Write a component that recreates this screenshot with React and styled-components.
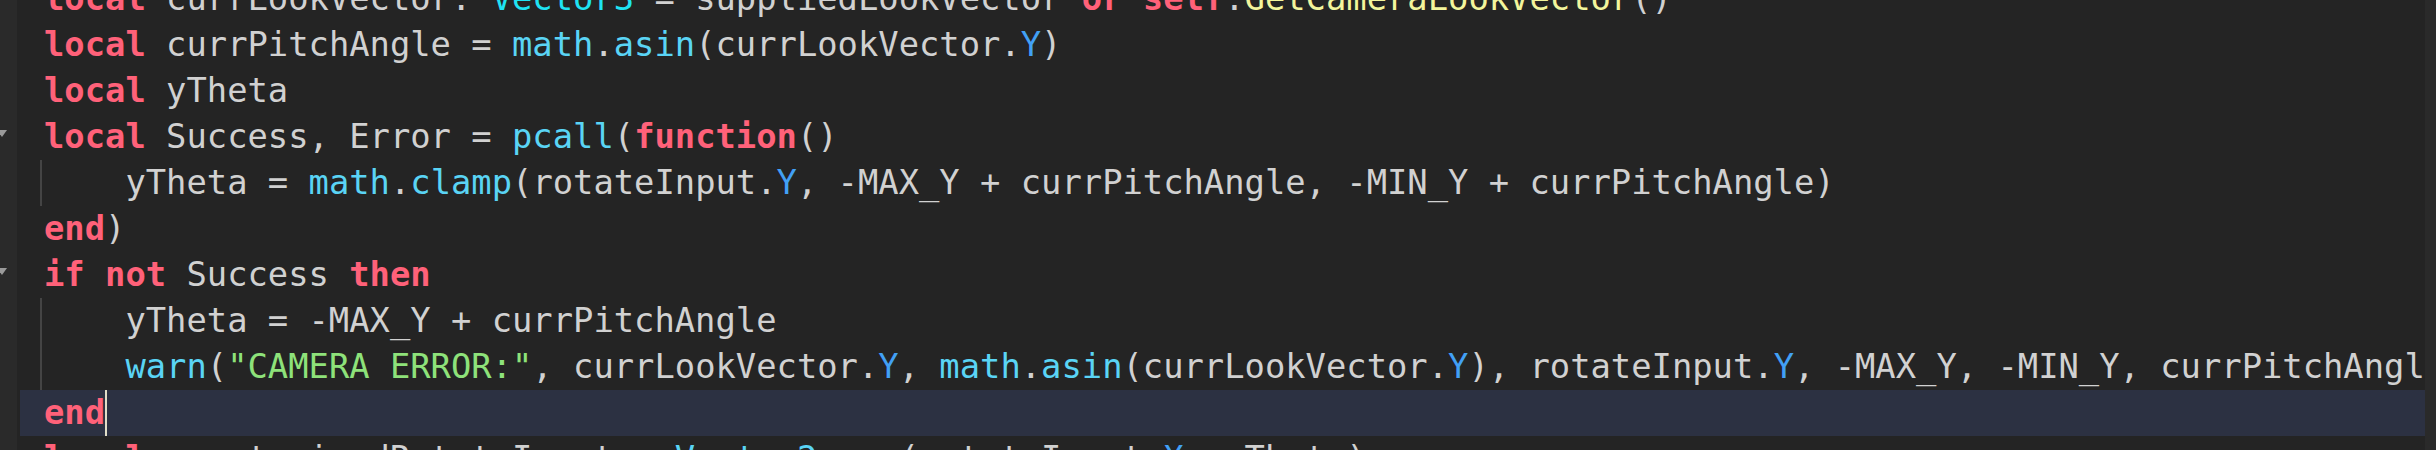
import React from 'react'
import styled, { createGlobalStyle } from 'styled-components';

const LINE = 46;

const Global = createGlobalStyle`
  html, body {
    margin: 0;
    padding: 0;
    background: #242424;
  }
  #root {
    height: 450px;
  }
`;

const Editor = styled.div`
  display: flex;
  width: 2436px;
  height: 450px;
  overflow: hidden;
  background-color: #242424;
  font-family: "DejaVu Sans Mono", "Liberation Mono", monospace;
  font-size: 33.8px;
`;

const Gutter = styled.div`
  width: 17px;
  flex-shrink: 0;
  background-color: #2a2a2a;
  overflow: hidden;
  display: flex;
  flex-direction: column;
`;

const GutterRow = styled.div`
  height: ${LINE}px;
  flex-shrink: 0;
  display: flex;
  align-items: flex-start;
  padding-top: 16px;
  box-sizing: border-box;
  &:first-child {
    margin-top: -24px;
  }
`;

const FoldArrow = styled.svg`
  margin-left: -3px;
  fill: #9a9a9a;
`;

const Code = styled.div`
  flex: 1;
  min-width: 0;
  padding-left: 3px;
  overflow: hidden;
  display: flex;
  flex-direction: column;
`;

const Line = styled.div`
  height: ${LINE}px;
  line-height: ${LINE}px;
  flex-shrink: 0;
  padding-left: 24px;
  white-space: pre;
  color: #d1d1d1;
  background-color: ${p => (p.$current ? '#2c3142' : 'transparent')};
  &:first-child {
    margin-top: -24px;
  }
`;

const Indent = styled.span`
  display: inline-block;
  vertical-align: top;
  height: ${LINE}px;
  margin-left: -4px;
  padding-left: 2px;
  border-left: 2px solid #444444;
`;

const colors = {
  kw: '#ff6179',
  id: '#d1d1d1',
  fn: '#5ad4f5',
  type: '#1fe3f3',
  field: '#42a0f5',
  str: '#8ee27a',
  method: '#f3f59c',
};

const Tok = styled.span`
  color: ${p => colors[p.$kind] || colors.id};
  font-weight: ${p => (p.$kind === 'kw' ? 700 : 400)};
`;

const Caret = styled.span`
  display: inline-block;
  vertical-align: top;
  width: 2px;
  height: ${LINE}px;
  background-color: #e2dec8;
`;

const ScrollStrip = styled.div`
  width: 11px;
  flex-shrink: 0;
  background-color: #2a2a2a;
`;

const lines = [
  { toks: [['kw', 'local'], ['id', ' currLookVector: '], ['type', 'Vector3'], ['id', ' = suppliedLookVector '], ['kw', 'or'], ['id', ' '], ['kw', 'self'], ['id', ':'], ['method', 'GetCameraLookVector'], ['id', '()']] },
  { toks: [['kw', 'local'], ['id', ' currPitchAngle = '], ['fn', 'math'], ['id', '.'], ['fn', 'asin'], ['id', '(currLookVector.'], ['field', 'Y'], ['id', ')']] },
  { toks: [['kw', 'local'], ['id', ' yTheta']] },
  { fold: true, toks: [['kw', 'local'], ['id', ' Success, Error = '], ['fn', 'pcall'], ['id', '('], ['kw', 'function'], ['id', '()']] },
  { indent: true, toks: [['id', 'yTheta = '], ['fn', 'math'], ['id', '.'], ['fn', 'clamp'], ['id', '(rotateInput.'], ['field', 'Y'], ['id', ', -MAX_Y + currPitchAngle, -MIN_Y + currPitchAngle)']] },
  { toks: [['kw', 'end'], ['id', ')']] },
  { fold: true, toks: [['kw', 'if'], ['id', ' '], ['kw', 'not'], ['id', ' Success '], ['kw', 'then']] },
  { indent: true, toks: [['id', 'yTheta = -MAX_Y + currPitchAngle']] },
  { indent: true, toks: [['fn', 'warn'], ['id', '('], ['str', '"CAMERA ERROR:"'], ['id', ', currLookVector.'], ['field', 'Y'], ['id', ', '], ['fn', 'math'], ['id', '.'], ['fn', 'asin'], ['id', '(currLookVector.'], ['field', 'Y'], ['id', '), rotateInput.'], ['field', 'Y'], ['id', ', -MAX_Y, -MIN_Y, currPitchAngle)']] },
  { current: true, caret: true, toks: [['kw', 'end']] },
  { toks: [['kw', 'local'], ['id', ' constrainedRotateInput = '], ['fn', 'Vector2'], ['id', '.'], ['fn', 'new'], ['id', '(rotateInput.'], ['field', 'X'], ['id', ', yTheta)']] },
];

function App() {
  return (
    <>
      <Global />
      <Editor>
        <Gutter>
          {lines.map((l, i) => (
            <GutterRow key={i}>
              {l.fold && (
                <FoldArrow width="10" height="8" viewBox="0 0 10 8">
                  <path d="M0 0 L10 0 L5 7 Z" />
                </FoldArrow>
              )}
            </GutterRow>
          ))}
        </Gutter>
        <Code>
          {lines.map((l, i) => (
            <Line key={i} $current={l.current}>
              {l.indent && <Indent>{'    '}</Indent>}
              {l.toks.map(([kind, text], j) => (
                <Tok key={j} $kind={kind}>{text}</Tok>
              ))}
              {l.caret && <Caret />}
            </Line>
          ))}
        </Code>
        <ScrollStrip />
      </Editor>
    </>
  );
}

export default App
